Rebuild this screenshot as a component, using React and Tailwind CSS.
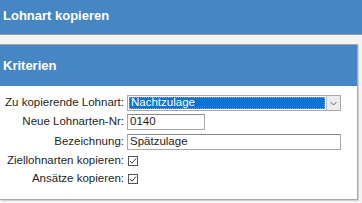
import React from 'react';

const Label = ({ children }) => (
    <div className="w-[125px] shrink-0 text-right pr-[1px] leading-none whitespace-nowrap">{children}</div>
);

const Check = () => (
    <span className="ml-[3px] flex h-[10px] w-[10px] items-center justify-center border border-[#555] bg-white">
        <svg width="8" height="8" viewBox="0 0 8 8" fill="none">
            <path d="M1 4.2 L3 6.2 L7 1.6" stroke="#333" strokeWidth="1" />
        </svg>
    </span>
);

export default function App() {
    return (
        <div className="w-[362px] h-[203px] overflow-hidden bg-[#f4f4f4] font-['Liberation_Sans',Arial,sans-serif] text-[11.5px] text-[#1e1e1e]">
            {/* Page title */}
            <div className="h-[35px] bg-[#4786c4] border-b border-[#9c9c9c] flex items-center px-[3px] pb-[2px]">
                <span className="text-white font-bold text-[13px]">Lohnart kopieren</span>
            </div>

            {/* Criteria panel */}
            <div className="mt-[9px] w-[358px] border border-l-0 border-[#a8a8a8] shadow-[1px_1px_0_#d0d0d0] bg-white">
                <div className="h-[41px] bg-[#4786c4] flex items-center px-[3px]">
                    <span className="text-white font-bold text-[13px]">Kriterien</span>
                </div>
                <div className="h-[113px] pt-[9px] flex flex-col">
                    <div className="flex items-center h-[16px]">
                        <Label>Zu kopierende Lohnart:</Label>
                        <div className="ml-[2px] w-[214px] h-[16px] border border-[#a9a9a9] bg-white flex">
                            <div className="flex-1 m-[1px] bg-[#0a74d6] border border-dotted border-[#7aa9e0] flex items-center px-[1px] text-white leading-none">
                                Nachtzulage
                            </div>
                            <div className="w-[14px] border-l border-[#c4c4c4] bg-[#ececec] flex items-center justify-center">
                                <svg width="7" height="5" viewBox="0 0 7 5" fill="none">
                                    <path d="M0.5 1 L3.5 4 L6.5 1" stroke="#666" strokeWidth="1" />
                                </svg>
                            </div>
                        </div>
                    </div>
                    <div className="flex items-center h-[16px] mt-[3px]">
                        <Label>Neue Lohnarten-Nr:</Label>
                        <div className="ml-[2px] w-[78px] h-[16px] border border-[#a9a9a9] border-t-[#8a8a8a] flex items-center px-[2px] leading-none">0140</div>
                    </div>
                    <div className="flex items-center h-[16px] mt-[4px]">
                        <Label>Bezeichnung:</Label>
                        <div className="ml-[2px] w-[214px] h-[16px] border border-[#a9a9a9] border-t-[#8a8a8a] flex items-center px-[2px] leading-none">Spätzulage</div>
                    </div>
                    <div className="flex items-center h-[18px] mt-[2px]">
                        <Label>Ziellohnarten kopieren:</Label>
                        <Check />
                    </div>
                    <div className="flex items-center h-[18px]">
                        <Label>Ansätze kopieren:</Label>
                        <Check />
                    </div>
                </div>
            </div>
        </div>
    );
}
